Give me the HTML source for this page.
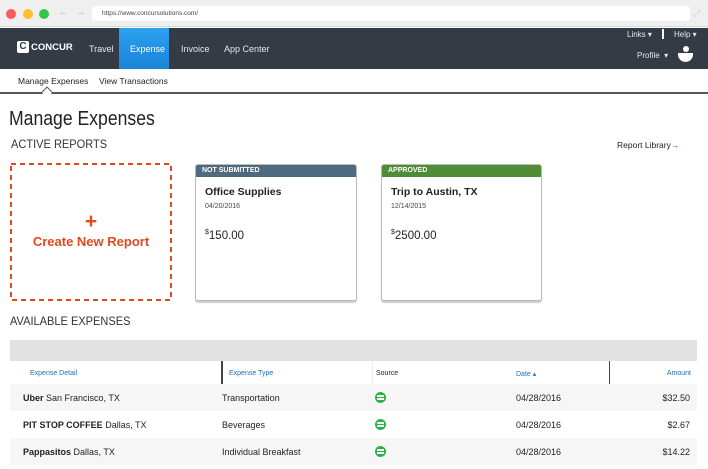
<!DOCTYPE html>
<html><head><meta charset="utf-8"><style>
*{margin:0;padding:0;box-sizing:border-box}
body{width:708px;height:469px;overflow:hidden;background:#fff;font-family:"Liberation Sans",Arial,sans-serif;position:relative;color:#222}
.a{position:absolute}
.dot{width:10px;height:10px;border-radius:50%;top:9px}
.nav{top:28px;left:0;width:708px;height:41px;background:#353b45}
.nt{color:#e6e6e6;font-size:9px;top:16px}
.card{border:1px solid #bbb;border-radius:3px;box-shadow:0 2px 1px #ccc;background:#fff}
.ch{height:12px;color:#fff;font-size:7px;font-weight:bold;padding:2px 0 0 6px}
.row{left:10px;width:687px;height:27px;font-size:9px}
.row span{position:absolute;top:9px}
.src{width:11px;height:11px;border-radius:50%;background:#2bb34a;top:8px!important}
.src:before{content:"";position:absolute;left:2px;top:3px;width:7px;height:1.5px;background:#fff;box-shadow:0 3px 0 #fff}
.hd{font-size:7px;top:10px;color:#1d6fb8}
</style></head><body>
<div class="a" style="top:0;left:0;width:708px;height:27px;background:#efefef;border-bottom:1px solid #d8d8d8"></div>
<div class="a dot" style="left:6px;background:#fc5b57"></div>
<div class="a dot" style="left:23px;background:#fdbf2d"></div>
<div class="a dot" style="left:39px;background:#33c748"></div>
<div class="a" style="left:58px;top:6px;color:#c4c4c4;font-size:11px">←&nbsp;&nbsp;→</div>
<div class="a" style="left:92px;top:6px;width:598px;height:15px;background:#fff;border-radius:3px"></div>
<div class="a" style="left:102px;top:10px;font-size:6.5px;color:#444">https://www.concursolutions.com/</div>
<div class="a" style="left:693px;top:8px;font-size:9px;color:#ccc">⤢</div>
<div class="a nav"></div>
<div class="a" style="left:17px;top:41px;width:12px;height:12px;background:#fff;border-radius:2px;color:#353b45;font-size:10px;font-weight:bold;line-height:12px;text-align:center">C</div>
<div class="a" style="left:31px;top:42px;color:#fff;font-size:9.5px;font-weight:bold">CONCUR</div>
<div class="a nt" style="left:89px;top:44px">Travel</div>
<div class="a" style="left:119px;top:28px;width:50px;height:41px;background:linear-gradient(#2da0f0,#1a84d8)"></div>
<div class="a nt" style="left:130px;top:44px;color:#fff">Expense</div>
<div class="a nt" style="left:181px;top:44px">Invoice</div>
<div class="a nt" style="left:224px;top:44px">App&nbsp;Center</div>
<div class="a" style="left:627px;top:30px;color:#e6e6e6;font-size:8px">Links ▾</div>
<div class="a" style="left:662px;top:29px;width:2px;height:10px;background:#fff"></div>
<div class="a" style="left:674px;top:30px;color:#e6e6e6;font-size:8px">Help ▾</div>
<div class="a" style="left:637px;top:51px;color:#e6e6e6;font-size:8px">Profile&nbsp;&nbsp;▾</div>
<div class="a" style="left:683px;top:46px;width:6px;height:6px;border-radius:50%;background:#fff"></div>
<div class="a" style="left:678px;top:53px;width:15px;height:9px;border-radius:0 0 8px 8px;background:#fff"></div>
<div class="a" style="left:18px;top:76px;font-size:8.5px">Manage Expenses</div>
<div class="a" style="left:99px;top:76px;font-size:8.5px">View Transactions</div>
<div class="a" style="top:92px;left:0;width:708px;height:2px;background:#555"></div>
<div class="a" style="left:43px;top:88px;width:8px;height:8px;background:#fff;border-left:1px solid #555;border-top:1px solid #555;transform:rotate(45deg)"></div>
<div class="a" style="left:9px;top:108px;font-size:20px;color:#222;transform:scaleX(0.88);transform-origin:left">Manage Expenses</div>
<div class="a" style="left:11px;top:139px;font-size:11.5px;color:#333;transform:scaleX(0.96);transform-origin:left">ACTIVE REPORTS</div>
<div class="a" style="left:617px;top:140px;font-size:8.5px">Report Library<span style="color:#1d6fb8">→</span></div>
<svg class="a" style="left:10px;top:163px" width="162" height="138"><rect x="1" y="1" width="160" height="136" fill="none" stroke="#e0491f" stroke-width="2" stroke-dasharray="5 4"/></svg>
<div class="a" style="left:0;width:182px;top:210px;text-align:center;color:#e0491f;font-weight:bold;font-size:21px">+</div>
<div class="a" style="left:0;width:182px;top:234px;text-align:center;color:#e0491f;font-weight:bold;font-size:13px">Create New Report</div>
<div class="a card" style="left:195px;top:164px;width:162px;height:137px;overflow:hidden"><div class="ch" style="background:#4f6a7f">NOT SUBMITTED</div></div>
<div class="a" style="left:205px;top:186px;font-size:10.5px;font-weight:bold">Office Supplies</div>
<div class="a" style="left:205px;top:203px;font-size:7px;color:#444">04/20/2016</div>
<div class="a" style="left:205px;top:229px;font-size:11.5px"><sup style="font-size:7px">$</sup>150.00</div>
<div class="a card" style="left:381px;top:164px;width:161px;height:137px;overflow:hidden"><div class="ch" style="background:#4f8c35">APPROVED</div></div>
<div class="a" style="left:391px;top:186px;font-size:10.5px;font-weight:bold">Trip to Austin, TX</div>
<div class="a" style="left:391px;top:203px;font-size:7px;color:#444">12/14/2015</div>
<div class="a" style="left:391px;top:229px;font-size:11.5px"><sup style="font-size:7px">$</sup>2500.00</div>
<div class="a" style="left:10px;top:316px;font-size:11.5px;color:#333;transform:scaleX(0.96);transform-origin:left">AVAILABLE EXPENSES</div>
<div class="a" style="left:10px;top:340px;width:687px;height:21px;background:#e1e2e1"></div>
<div class="a row" style="top:361px;height:23px">
<span class="hd" style="left:20px">Expense Detail</span>
<span class="hd" style="left:219px">Expense Type</span>
<span class="hd" style="left:366px;color:#222">Source</span>
<span class="hd" style="left:506px">Date ▴</span>
<span class="hd" style="right:6px">Amount</span>
</div>
<div class="a" style="left:221px;top:361px;width:2px;height:23px;background:#444"></div>
<div class="a" style="left:372px;top:361px;width:1px;height:23px;background:#eee"></div>
<div class="a" style="left:609px;top:361px;width:1px;height:23px;background:#444"></div>
<div class="a row" style="top:384px;background:#f6f6f6"><span style="left:13px"><b>Uber</b> San Francisco, TX</span><span style="left:212px">Transportation</span><span class="src" style="left:365px"></span><span style="left:506px">04/28/2016</span><span style="right:7px">$32.50</span></div>
<div class="a row" style="top:411px;background:#fff"><span style="left:13px"><b>PIT STOP COFFEE</b> Dallas, TX</span><span style="left:212px">Beverages</span><span class="src" style="left:365px"></span><span style="left:506px">04/28/2016</span><span style="right:7px">$2.67</span></div>
<div class="a row" style="top:438px;background:#f6f6f6"><span style="left:13px"><b>Pappasitos</b> Dallas, TX</span><span style="left:212px">Individual Breakfast</span><span class="src" style="left:365px"></span><span style="left:506px">04/28/2016</span><span style="right:7px">$14.22</span></div>
</body></html>
